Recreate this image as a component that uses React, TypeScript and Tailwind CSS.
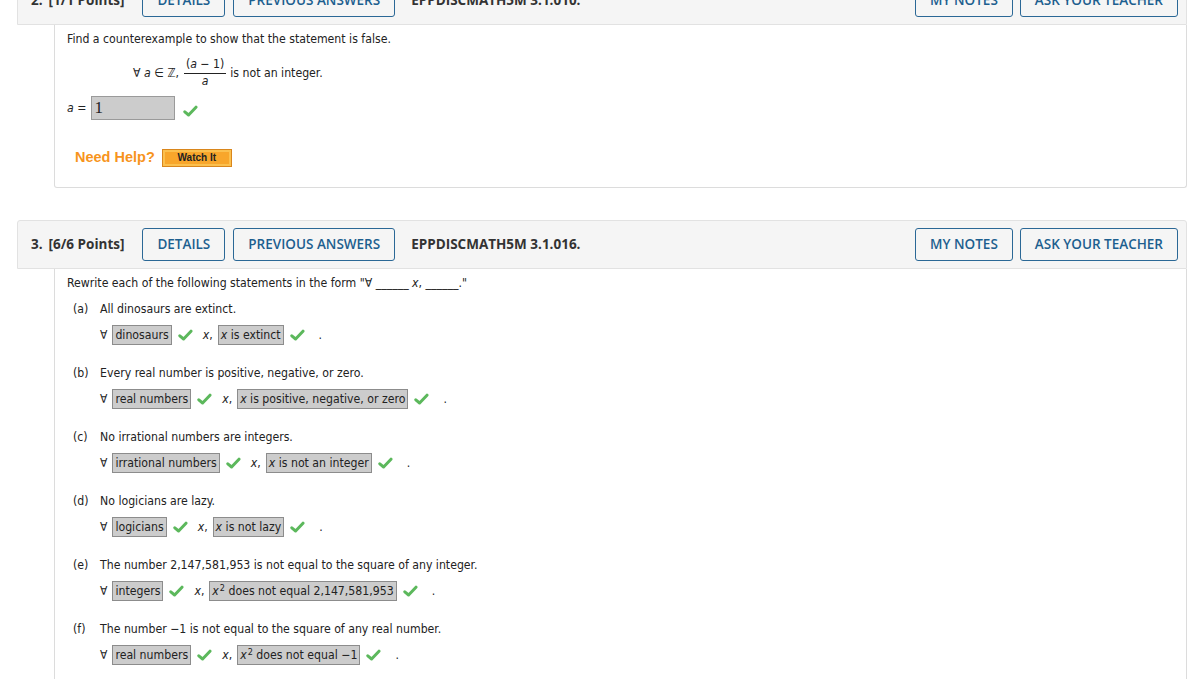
const body = { fontFamily: '"DejaVu Sans Condensed", "DejaVu Sans", Verdana, sans-serif' };
const head = { fontFamily: '"Open Sans", "Noto Sans", sans-serif' };

const Check = () => (
  <svg width="15" height="12" viewBox="0 0 15 12" className="mx-[6px] shrink-0">
    <path d="M1.8 6.8 L5.6 10 L13 2.2" fill="none" stroke="#5cb85c" strokeWidth="3" strokeLinecap="round" strokeLinejoin="round" />
  </svg>
);

const Box = ({ children }: { children: React.ReactNode }) => (
  <span className="inline-flex h-[20px] items-center border border-[#8c8c8c] bg-[#cccccc] px-[2px] leading-none text-[#222]">
    {children}
  </span>
);

const Sq = () => <span className="relative -top-[3px] ml-[1px] text-[9px]">2</span>;

const HeaderBar = ({ num, pts, code }: { num: string; pts: string; code: string }) => (
  <div
    className="flex h-[49px] items-center rounded-t-[3px] border border-[#e2e2e2] bg-[#f5f5f5] pl-[13px] pr-[8px] text-[13.5px] font-bold text-[#333]"
    style={head}
  >
    <span>{num}</span>
    <span className="ml-[6px]">{pts}</span>
    <button className="ml-[18px] h-[33px] rounded-[3px] border border-[#2b6896] px-[14px] font-semibold text-[#1d5f8f]">DETAILS</button>
    <button className="ml-[8px] h-[33px] rounded-[3px] border border-[#2b6896] px-[14px] font-semibold text-[#1d5f8f]">PREVIOUS ANSWERS</button>
    <span className="ml-[16px]">{code}</span>
    <button className="ml-auto h-[33px] rounded-[3px] border border-[#2b6896] px-[14px] font-semibold text-[#1d5f8f]">MY NOTES</button>
    <button className="ml-[7px] h-[33px] rounded-[3px] border border-[#2b6896] px-[14px] font-semibold text-[#1d5f8f]">ASK YOUR TEACHER</button>
  </div>
);

type Part = { key: string; text: React.ReactNode; first: string; second: React.ReactNode };

const parts: Part[] = [
  { key: "a", text: "All dinosaurs are extinct.", first: "dinosaurs", second: <><i>x</i>&nbsp;is extinct</> },
  { key: "b", text: "Every real number is positive, negative, or zero.", first: "real numbers", second: <><i>x</i>&nbsp;is positive, negative, or zero</> },
  { key: "c", text: "No irrational numbers are integers.", first: "irrational numbers", second: <><i>x</i>&nbsp;is not an integer</> },
  { key: "d", text: "No logicians are lazy.", first: "logicians", second: <><i>x</i>&nbsp;is not lazy</> },
  { key: "e", text: "The number 2,147,581,953 is not equal to the square of any integer.", first: "integers", second: <><i>x</i><Sq />&nbsp;does not equal 2,147,581,953</> },
  { key: "f", text: "The number −1 is not equal to the square of any real number.", first: "real numbers", second: <><i>x</i><Sq />&nbsp;does not equal −1</> },
];

export default function App() {
  return (
    <div className="min-h-[679px] overflow-hidden bg-white pl-[17px] pr-[13px] text-[12.2px] text-[#222]" style={body}>
      {/* Question 2 */}
      <div className="-mt-[24px]">
        <HeaderBar num="2." pts="[1/1 Points]" code="EPPDISCMATH5M 3.1.010." />
        <div className="ml-[37px] h-[163px] rounded-b-[3px] border-x border-b border-[#dcdcdc] pl-[12px] pt-[6px]">
          <p className="leading-[16px]">Find a counterexample to show that the statement is false.</p>
          <div className="ml-[66px] mt-[11px] flex items-center">
            <span>∀ <i>a</i> ∈ ℤ,</span>
            <span className="ml-[5px] inline-flex flex-col items-center leading-[13px]">
              <span className="border-b border-[#222] px-[2px] pb-[2px]">(<i>a</i> − 1)</span>
              <span className="pt-[1px]"><i>a</i></span>
            </span>
            <span className="ml-[4px]">is not an integer.</span>
          </div>
          <div className="mt-[8px] flex items-center">
            <span><i>a</i> =</span>
            <span
              className="ml-[5px] flex h-[24px] w-[84px] items-center border border-[#9a9a9a] bg-[#cccccc] pl-[2px] text-[17px] text-[#222]"
              style={{ fontFamily: '"Liberation Serif", serif' }}
            >
              1
            </span>
            <span className="ml-[2px] mt-[6px]"><Check /></span>
          </div>
          <div className="ml-[8px] mt-[27px] flex items-center">
            <span className="text-[14.5px] font-bold text-[#f7941d]" style={{ fontFamily: '"Liberation Sans", Arial, sans-serif' }}>
              Need Help?
            </span>
            <span
              className="ml-[7px] flex h-[18px] w-[70px] items-center justify-center border border-[#d9861c] bg-[#f8a62b] text-[10px] font-bold text-[#222] shadow-[inset_0_0_0_2px_#fbc04e]"
              style={{ fontFamily: '"Liberation Sans", Arial, sans-serif' }}
            >
              Watch It
            </span>
          </div>
        </div>
      </div>

      {/* Question 3 */}
      <div className="mt-[32px]">
        <HeaderBar num="3." pts="[6/6 Points]" code="EPPDISCMATH5M 3.1.016." />
        <div className="ml-[37px] h-[420px] border-x border-[#dcdcdc] pl-[12px] pt-[6px]">
          <p className="leading-[16px]">
            Rewrite each of the following statements in the form "∀ ______ <i>x</i>, ______."
          </p>
          <div className="mt-[10px] flex flex-col gap-[20px]">
            {parts.map((p) => (
              <div key={p.key} className="ml-[6px]">
                <div className="flex leading-[16px]">
                  <span className="w-[27px]">({p.key})</span>
                  <span>{p.text}</span>
                </div>
                <div className="ml-[27px] mt-[8px] flex h-[20px] items-center">
                  <span className="mr-[5px] text-[12px]">∀</span>
                  <Box>{p.first}</Box>
                  <Check />
                  <span className="ml-[4px] mr-[5px]"><i>x</i>,</span>
                  <Box>{p.second}</Box>
                  <Check />
                  <span className="ml-[8px]">.</span>
                </div>
              </div>
            ))}
          </div>
        </div>
      </div>
    </div>
  );
}
